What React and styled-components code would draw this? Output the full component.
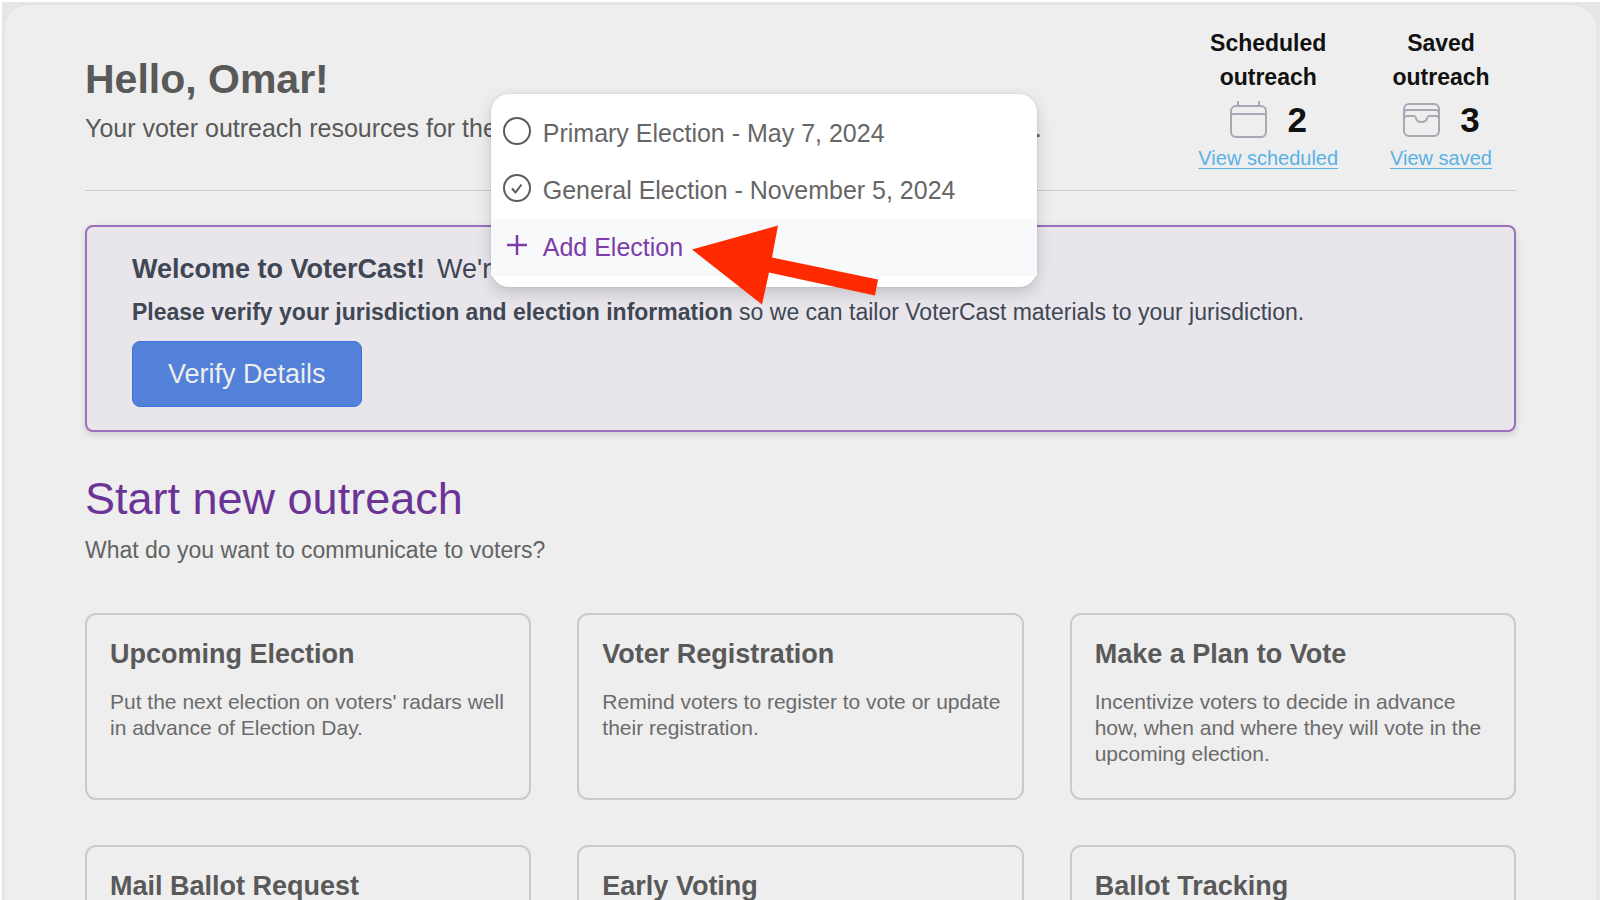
import React from "react";
import styled, { createGlobalStyle } from "styled-components";

const GlobalStyle = createGlobalStyle`
  *, *::before, *::after { box-sizing: border-box; }
  body {
    margin: 0;
    background: #ffffff;
    color: #595959;
    font-family: "Liberation Sans", Arial, sans-serif;
  }
  h1, h2, h3, p { margin: 0; }
  button, input { font: inherit; margin: 0; }
`;

const Frame = styled.div`
  height: 100vh;
  padding: 2px 0 0 2px;
  overflow: hidden;
`;

const Backdrop = styled.div`
  padding: 2px 4px 0 3px;
  background: #e6e6e6;
`;

const Panel = styled.main`
  min-height: 100vh;
  padding: 0 80px 46px;
  border-top: 1px solid #e1e1e1;
  border-radius: 24px 24px 0 0;
  background: #eeeeee;
`;

const Header = styled.header`
  display: flex;
  justify-content: space-between;
  align-items: flex-start;
  padding: 21px 24px 20px 0;
  border-bottom: 1px solid #c9c9d1;
`;

const Greeting = styled.div`
  padding-top: 29px;
`;

const Title = styled.h1`
  font-size: 41px;
  line-height: 48px;
`;

const Subtitle = styled.div`
  margin-top: 7px;
  font-size: 25px;
  line-height: 36px;
  white-space: nowrap;
`;

const Picker = styled.span`
  position: relative;
  display: inline-block;
`;

const PickerTrigger = styled.button`
  min-width: 531px;
  padding: 0;
  border: 0;
  background: none;
  color: inherit;
  text-align: left;
`;

const Menu = styled.div`
  position: absolute;
  z-index: 2;
  top: -16px;
  left: -13px;
  width: 546px;
  padding: 11px 0 11px;
  border-radius: 18px;
  background: #ffffff;
  color: #666666;
  box-shadow: 0 6px 16px rgba(0, 0, 0, 0.16), 0 0 3px rgba(0, 0, 0, 0.1);
`;

const Option = styled.label`
  display: flex;
  align-items: center;
  gap: 12px;
  height: 57px;
  padding: 0 12px 2px;
`;

const RadioMark = styled.span`
  display: grid;
  width: 28px;
  height: 32px;

  > * { grid-area: 1 / 1; }
`;

const Radio = styled.input`
  appearance: none;
  width: 28px;
  height: 28px;
  border: 2px solid #5c5c5c;
  border-radius: 50%;
`;

const AddOption = styled.button`
  position: relative;
  display: flex;
  align-items: center;
  gap: 12px;
  width: 100%;
  height: 57px;
  padding: 0 12px 2px;
  border: 0;
  background: #f8f9fb;
  color: #7c3dab;
`;

const Pointer = styled.svg`
  position: absolute;
  top: 6px;
  left: 201px;
`;

const Stats = styled.div`
  display: flex;
  gap: 52px;
`;

const Stat = styled.section`
  display: flex;
  flex-direction: column;
  align-items: center;
  color: #111111;
`;

const StatTitle = styled.h2`
  width: min-content;
  font-size: 23px;
  line-height: 34px;
  text-align: center;
`;

const StatValue = styled.div`
  display: flex;
  align-items: center;
  gap: 20px;
  height: 52px;
  font-size: 35px;
  font-weight: bold;
`;

const StatLink = styled.a`
  color: #58b2e4;
  font-size: 20px;
  line-height: 24px;
  text-decoration: underline;
  text-decoration-thickness: 1px;
  text-underline-offset: 3px;
`;

const Banner = styled.section`
  margin-top: 34px;
  padding: 24px 45px 23px;
  border: 2px solid #9c6fbc;
  border-radius: 8px;
  background: #e8e6eb;
  color: #3f4654;
  box-shadow: 0 3px 7px rgba(0, 0, 0, 0.13);
`;

const BannerTitle = styled.p`
  display: flex;
  gap: 12px;
  font-size: 27px;
  line-height: 36px;
`;

const BannerText = styled.p`
  margin-top: 8px;
  font-size: 23px;
  line-height: 34px;
`;

const VerifyButton = styled.button`
  display: block;
  height: 66px;
  margin-top: 12px;
  padding: 0 35px;
  border: 1px solid #3f6fdc;
  border-radius: 8px;
  background: #5380d8;
  color: #eeeeee;
  font-size: 27px;
`;

const SectionTitle = styled.h2`
  margin-top: 39px;
  color: #6c3396;
  font-size: 45px;
  font-weight: normal;
  line-height: 56px;
`;

const SectionText = styled.p`
  margin-top: 6px;
  color: #636363;
  font-size: 23px;
  line-height: 34px;
`;

const CardGrid = styled.div`
  display: grid;
  grid-template-columns: repeat(3, 1fr);
  grid-auto-rows: minmax(187px, auto);
  gap: 45px 46px;
  margin-top: 46px;
`;

const Card = styled.article`
  padding: 21px 16px 21px 23px;
  border: 2px solid #c8cacf;
  border-radius: 11px;
`;

const CardTitle = styled.h3`
  font-size: 27px;
  line-height: 36px;
`;

const CardText = styled.p`
  margin-top: 17px;
  color: #6b6b6b;
  font-size: 21px;
  line-height: 26px;
`;

const CalendarIcon = () => (
  <svg width="38" height="40" viewBox="0 0 38 40" fill="none" stroke="#a6a9b4" strokeWidth="2" aria-hidden="true">
    <rect x="2" y="6" width="35" height="31" rx="5" />
    <path d="M2 16c0-1 1-2 3-2h29c2 0 3 1 3 2M9 1v5M30 1v5" />
  </svg>
);

const InboxIcon = () => (
  <svg width="38" height="40" viewBox="0 0 38 40" fill="none" stroke="#a6a9b4" strokeWidth="2" aria-hidden="true">
    <rect x="2" y="4" width="35" height="32" rx="5" />
    <path d="M2 13c0-2 1-3 3-3h29c2 0 3 1 3 3M2 19c0-2 1-3 3-3h7c1.500 0 1.500 1 2 2.500 1 4.500 10 4.500 11 0 .5-1.500.5-2.500 2-2.500h7c2 0 3 1 3 3" />
  </svg>
);

const CheckIcon = () => (
  <svg width="28" height="28" viewBox="0 0 28 28" fill="none" stroke="#5c5c5c" strokeWidth="2" aria-hidden="true">
    <path d="M9 14.500l3.500 4 6-8" />
  </svg>
);

const PlusIcon = () => (
  <svg width="28" height="32" viewBox="0 0 28 32" fill="none" stroke="#7c3dab" strokeWidth="2.500" aria-hidden="true">
    <path d="M14 4v20M4 14h20" />
  </svg>
);

const PointerArrow = () => (
  <Pointer width="188" height="82" viewBox="0 0 188 82" fill="#ff2a00" aria-hidden="true">
    <path d="M0 24.500L86 .5 80 32.500 186 54.500 183 70.500 77 47.500 70 79.500Z" />
  </Pointer>
);

const elections = [
  { name: "Primary Election - May 7, 2024", selected: false },
  { name: "General Election - November 5, 2024", selected: true },
];

const stats = [
  { title: "Scheduled outreach", Icon: CalendarIcon, count: 2, link: "View scheduled", href: "#scheduled" },
  { title: "Saved outreach", Icon: InboxIcon, count: 3, link: "View saved", href: "#saved" },
];

const topics = [
  { title: "Upcoming Election", text: "Put the next election on voters' radars well in advance of Election Day." },
  { title: "Voter Registration", text: "Remind voters to register to vote or update their registration." },
  { title: "Make a Plan to Vote", text: "Incentivize voters to decide in advance how, when and where they will vote in the upcoming election." },
  { title: "Mail Ballot Request" },
  { title: "Early Voting" },
  { title: "Ballot Tracking" },
];

const ElectionPicker = () => (
  <Picker>
    <PickerTrigger type="button" aria-label="Choose election" aria-expanded="true">&nbsp;</PickerTrigger>
    <Menu>
      {elections.map(({ name, selected }) => (
        <Option key={name}>
          <RadioMark>
            <Radio type="radio" name="election" defaultChecked={selected} />
            {selected && <CheckIcon />}
          </RadioMark>
          {name}
        </Option>
      ))}
      <AddOption type="button">
        <PlusIcon />
        Add Election
        <PointerArrow />
      </AddOption>
    </Menu>
  </Picker>
);

export default function App() {
  return (
    <Frame>
      <GlobalStyle />
      <Backdrop>
        <Panel>
          <Header>
            <Greeting>
              <Title>Hello, Omar!</Title>
              <Subtitle>
                Your voter outreach resources for the <ElectionPicker />.
              </Subtitle>
            </Greeting>
            <Stats>
              {stats.map(({ title, Icon, count, link, href }) => (
                <Stat key={title}>
                  <StatTitle>{title}</StatTitle>
                  <StatValue>
                    <Icon />
                    {count}
                  </StatValue>
                  <StatLink href={href}>{link}</StatLink>
                </Stat>
              ))}
            </Stats>
          </Header>

          <Banner>
            <BannerTitle>
              <strong>Welcome to VoterCast!</strong>
              <span>We're</span>
            </BannerTitle>
            <BannerText>
              <strong>Please verify your jurisdiction and election information</strong> so we can tailor
              VoterCast materials to your jurisdiction.
            </BannerText>
            <VerifyButton type="button">Verify Details</VerifyButton>
          </Banner>

          <SectionTitle>Start new outreach</SectionTitle>
          <SectionText>What do you want to communicate to voters?</SectionText>

          <CardGrid>
            {topics.map(({ title, text }) => (
              <Card key={title}>
                <CardTitle>{title}</CardTitle>
                {text && <CardText>{text}</CardText>}
              </Card>
            ))}
          </CardGrid>
        </Panel>
      </Backdrop>
    </Frame>
  );
}
